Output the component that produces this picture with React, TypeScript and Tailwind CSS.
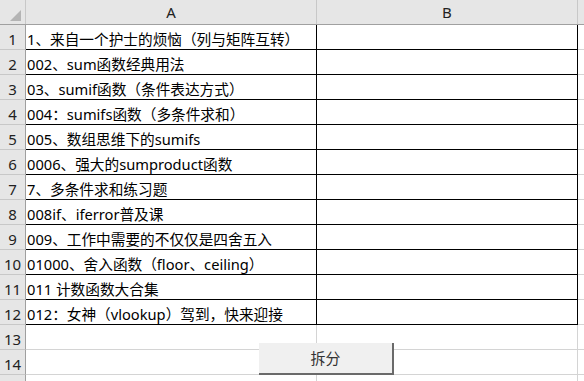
import React from "react";

const items = [
  "1、来自一个护士的烦恼（列与矩阵互转）",
  "002、sum函数经典用法",
  "03、sumif函数（条件表达方式）",
  "004：sumifs函数（多条件求和）",
  "005、数组思维下的sumifs",
  "0006、强大的sumproduct函数",
  "7、多条件求和练习题",
  "008if、iferror普及课",
  "009、工作中需要的不仅仅是四舍五入",
  "01000、舍入函数（floor、ceiling）",
  "011 计数函数大合集",
  "012：女神（vlookup）驾到，快来迎接",
];

const font = { fontFamily: '"Noto Sans", "Noto Sans CJK SC", sans-serif' };

function RowHead({ n }: { n?: number }) {
  return (
    <div className="w-[26px] shrink-0 bg-[#e6e6e6] border-r border-r-[#9f9f9f] border-b border-b-[#c8c8c8] flex items-end justify-center text-[15px] leading-[20px] text-[#222]">
      {n}
    </div>
  );
}

export default function App() {
  return (
    <div className="w-[584px] h-[381px] overflow-hidden bg-white relative text-black" style={font}>
      <div className="flex h-[25px] bg-[#e6e6e6] border-b border-[#a0a0a0]">
        <div className="w-[26px] shrink-0 border-r border-[#c8c8c8] relative">
          <svg className="absolute left-[10px] top-[10px]" width="11" height="11" viewBox="0 0 11 11">
            <polygon points="11,0 11,11 0,11" fill="#b4b4b4" />
          </svg>
        </div>
        <div className="w-[291px] shrink-0 border-r border-[#c8c8c8] flex items-center justify-center text-[15px] text-[#222]">
          A
        </div>
        <div className="w-[261px] shrink-0 border-r border-[#c8c8c8] flex items-center justify-center text-[15px] text-[#222]">
          B
        </div>
        <div className="flex-1" />
      </div>
      {items.map((t, i) => (
        <div key={i} className="flex h-[25px]">
          <RowHead n={i + 1} />
          <div className="w-[291px] shrink-0 border-r border-b border-black flex items-end pl-[1px] text-[14.67px] leading-[20px] whitespace-nowrap overflow-hidden">
            {t}
          </div>
          <div className="w-[261px] shrink-0 border-r border-b border-black" />
          <div className="flex-1 border-b border-[#d4d4d4]" />
        </div>
      ))}
      {[13, 14, 0].map((n) => (
        <div key={n} className="flex h-[25px]">
          <RowHead n={n || undefined} />
          <div className="w-[291px] shrink-0 border-r border-b border-[#d4d4d4]" />
          <div className="w-[261px] shrink-0 border-r border-b border-[#d4d4d4]" />
          <div className="flex-1 border-b border-[#d4d4d4]" />
        </div>
      ))}
      <button
        className="absolute left-[259px] top-[343px] w-[135px] h-[32px] bg-[#f0f0f0] border-r-2 border-b-2 border-[#6a6a6a] flex items-center justify-center text-[15px] text-[#333]"
        style={{ fontFamily: '"Noto Sans CJK SC", sans-serif' }}
      >
        拆分
      </button>
    </div>
  );
}
